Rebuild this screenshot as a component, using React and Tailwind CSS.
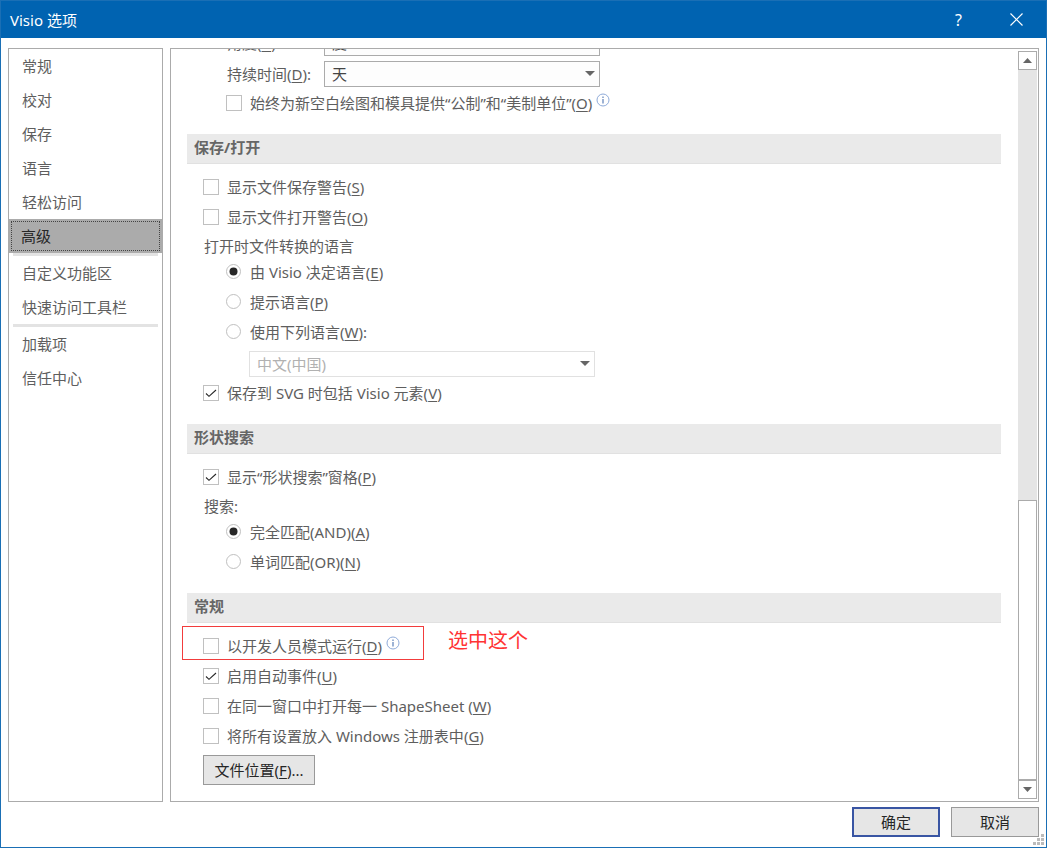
import React from "react";

const Key = ({ children }) => (
  <>
    (<span className="underline underline-offset-2">{children}</span>)
  </>
);

const InfoIcon = () => (
  <svg className="mb-[6px] ml-1 size-[14px] shrink-0" viewBox="0 0 14 14" fill="none">
    <circle cx="7" cy="7" r="6" stroke="#8fabd9" />
    <path d="M7 6v4.500" stroke="#5b7fb8" strokeWidth="1.2" />
    <path d="M7 3.500v1.400" stroke="#5b7fb8" strokeWidth="1.200" />
  </svg>
);

const CheckRow = ({ children, checked, info, className = "" }) => (
  <div className={`flex h-[30px] items-center ${className}`}>
    <label className="flex items-center gap-2 whitespace-nowrap">
      <span className="grid shrink-0">
        <input
          type="checkbox"
          defaultChecked={checked}
          className="peer col-start-1 row-start-1 size-4 appearance-none border border-[#c0c0c0] bg-white"
        />
        <svg
          className="pointer-events-none invisible col-start-1 row-start-1 size-4 peer-checked:visible"
          viewBox="0 0 16 16"
          fill="none"
        >
          <path d="M3 8.500l3 2.800L13 5" stroke="#262626" strokeWidth="1.100" />
        </svg>
      </span>
      <span>{children}</span>
    </label>
    {info && <InfoIcon />}
  </div>
);

const RadioRow = ({ children, name, checked }) => (
  <label className="ml-[23px] flex h-[30px] items-center gap-[9px] whitespace-nowrap">
    <span className="mb-[2px] grid shrink-0">
      <input
        type="radio"
        name={name}
        defaultChecked={checked}
        className="peer col-start-1 row-start-1 size-[15px] appearance-none rounded-full border border-[#c0c0c0] bg-white"
      />
      <svg
        className="pointer-events-none invisible col-start-1 row-start-1 size-[15px] peer-checked:visible"
        viewBox="0 0 15 15"
      >
        <circle cx="7.500" cy="7.500" r="4" fill="#262626" />
      </svg>
    </span>
    <span>{children}</span>
  </label>
);

const SelectBox = ({ id, label, value, disabled, className }) => (
  <div className={`grid h-[26px] items-center ${className}`}>
    <select
      id={id}
      aria-label={label}
      disabled={disabled}
      className="col-start-1 row-start-1 h-[26px] w-full appearance-none border border-[#ababab] bg-[#fdfdfd] px-[7px] text-[#444] disabled:border-[#e1e1e1] disabled:bg-white disabled:text-[#b1b1b1] disabled:opacity-100"
    >
      <option>{value}</option>
    </select>
    <svg
      className="pointer-events-none col-start-1 row-start-1 mr-[5px] mb-[2px] h-[5px] w-[10px] justify-self-end"
      viewBox="0 0 10 5"
    >
      <path d="M0 0h10L5 5z" fill="#666" />
    </svg>
  </div>
);

const SectionTitle = ({ children }) => (
  <h2 className="mt-4 mb-2 h-[30px] border-b border-[#e1e1e1] bg-[#eaeaea] px-[7px] leading-[26px] font-bold text-[#666]">
    {children}
  </h2>
);

const navGroups = [
  ["常规", "校对", "保存", "语言", "轻松访问", "高级"],
  ["自定义功能区", "快速访问工具栏"],
  ["加载项", "信任中心"],
];

const Sidebar = () => (
  <nav className="w-[155px] shrink-0 border border-[#ababab]">
    {navGroups.map((group, i) => (
      <div key={group[0]}>
        {i > 0 && <div className="mx-1 h-[3px] bg-[#e3e3e3]" />}
        {group.map((item) =>
          item === "高级" ? (
            <button key={item} className="block h-[34px] w-full bg-[#ababab] p-[2px] text-left text-[#262626]">
              <span className="flex h-full items-center border border-dotted border-[#444] px-[9px]">{item}</span>
            </button>
          ) : (
            <button key={item} className="block h-[34px] w-full px-[13px] text-left">
              {item}
            </button>
          )
        )}
      </div>
    ))}
  </nav>
);

const ScrollBar = () => (
  <div className="flex w-[19px] shrink-0 flex-col bg-[#e5e5e5]">
    <button aria-label="向上" className="flex h-[19px] items-center justify-center border border-[#ababab] bg-white">
      <svg className="h-[5px] w-[9px]" viewBox="0 0 9 5">
        <path d="M0 5h9L4.500 0z" fill="#666" />
      </svg>
    </button>
    <div className="grow-[431]" />
    <div className="grow-[278] border border-b-0 border-[#ababab] bg-white" />
    <button aria-label="向下" className="flex h-[20px] items-center justify-center border border-t-2 border-[#ababab] bg-white">
      <svg className="h-[5px] w-[9px]" viewBox="0 0 9 5">
        <path d="M0 0h9L4.500 5z" fill="#666" />
      </svg>
    </button>
  </div>
);

const Options = () => (
  <div className="min-w-0 flex-1 pr-[17px] pb-4 pl-4">
    <div className="mb-[5px] ml-10 flex h-[7px] items-end overflow-hidden">
      <label htmlFor="angle" className="w-[97px] shrink-0 leading-[26px]">
        角度<Key>A</Key>:
      </label>
      <SelectBox id="angle" value="度" className="w-[276px] shrink-0" />
    </div>
    <div className="ml-10 flex items-center">
      <label htmlFor="duration" className="w-[97px] shrink-0">
        持续时间<Key>D</Key>:
      </label>
      <SelectBox id="duration" value="天" className="w-[276px]" />
    </div>
    <CheckRow className="mt-[1px] ml-[39px]" info>
      始终为新空白绘图和模具提供“公制”和“美制单位”<Key>O</Key>
    </CheckRow>

    <SectionTitle>保存/打开</SectionTitle>
    <div className="pl-4">
      <CheckRow>显示文件保存警告<Key>S</Key></CheckRow>
      <CheckRow>显示文件打开警告<Key>O</Key></CheckRow>
      <p className="flex h-[25px] items-end pl-[1px] leading-[22px]">打开时文件转换的语言</p>
      <RadioRow name="lang" checked>由 Visio 决定语言<Key>E</Key></RadioRow>
      <RadioRow name="lang">提示语言<Key>P</Key></RadioRow>
      <RadioRow name="lang">使用下列语言<Key>W</Key>:</RadioRow>
      <SelectBox label="语言" value="中文(中国)" disabled className="mt-1 mb-[1px] ml-[46px] w-[346px]" />
      <CheckRow checked>保存到 SVG 时包括 Visio 元素<Key>V</Key></CheckRow>
    </div>

    <SectionTitle>形状搜索</SectionTitle>
    <div className="pl-4">
      <CheckRow checked>显示“形状搜索”窗格<Key>P</Key></CheckRow>
      <p className="flex h-[25px] items-end pl-[1px] leading-[22px]">搜索:</p>
      <RadioRow name="match" checked>完全匹配(AND)<Key>A</Key></RadioRow>
      <RadioRow name="match">单词匹配(OR)<Key>N</Key></RadioRow>
    </div>

    <SectionTitle>常规</SectionTitle>
    <div className="pl-4">
      <div className="relative">
        <CheckRow info>以开发人员模式运行<Key>D</Key></CheckRow>
        <div className="pointer-events-none absolute -top-[5px] -left-[21px] flex items-center">
          <div className="h-[34px] w-[242px] border border-[#f23c3c]" />
          <span className="-mt-1 ml-6 text-[20px] whitespace-nowrap text-[#ff3333]">选中这个</span>
        </div>
      </div>
      <CheckRow checked>启用自动事件<Key>U</Key></CheckRow>
      <CheckRow>在同一窗口中打开每一 ShapeSheet <Key>W</Key></CheckRow>
      <CheckRow>将所有设置放入 Windows 注册表中<Key>G</Key></CheckRow>
      <button className="mt-1 block h-[30px] w-28 border border-[#999] bg-[#e6e6e6] text-[#262626]">
        文件位置<Key>F</Key>...
      </button>
    </div>
  </div>
);

const App = () => {
  return (
    <div className="relative flex min-h-screen flex-col border border-[#1a6fb5] bg-white font-['Noto_Sans','Noto_Sans_CJK_SC',sans-serif] text-[15px] leading-5 text-[#5e5e5e]">
      <header className="flex h-[37px] items-center bg-[#0063b1] pl-[9px] text-white">
        <h1 className="flex-1">Visio 选项</h1>
        <button aria-label="帮助" className="h-full w-[57px] text-base">?</button>
        <button aria-label="关闭" className="flex h-full w-[59px] items-center justify-center">
          <svg className="size-[13px]" viewBox="0 0 13 13" fill="none">
            <path d="M.5.5l12 12M12.500.5l-12 12" stroke="white" strokeWidth="1.200" />
          </svg>
        </button>
      </header>

      <main className="flex flex-1 gap-[7px] px-[7px] pt-[10px]">
        <Sidebar />
        <div className="flex min-w-0 flex-1 border border-[#ababab]">
          <Options />
          <div className="flex py-[2px] pr-[1px]">
            <ScrollBar />
          </div>
        </div>
      </main>

      <footer className="flex justify-end gap-[11px] px-[7px] pt-[5px] pb-[10px] text-[#262626]">
        <button className="h-[30px] w-[88px] border-2 border-[#3955a3] bg-[#e6e6e6]">确定</button>
        <button className="h-[30px] w-[88px] border border-[#999] bg-[#e6e6e6]">取消</button>
      </footer>

      <svg className="absolute right-[2px] bottom-[2px] size-[11px]" viewBox="0 0 11 11" fill="#bbb">
        <path d="M8 0h3v3H8zM4 4h3v3H4zM8 4h3v3H8zM0 8h3v3H0zM4 8h3v3H4zM8 8h3v3H8z" />
      </svg>
    </div>
  );
};

export default App;
